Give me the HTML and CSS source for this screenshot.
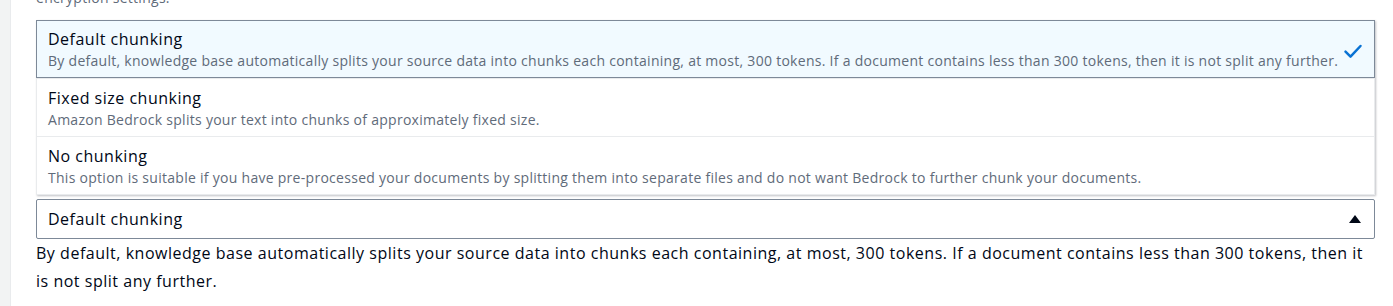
FILE: index.html
```html
<!DOCTYPE html>
<html lang="en">
<head>
  <meta charset="UTF-8">
  <title>Chunking strategy</title>
  <link rel="stylesheet" href="styles.css">
</head>
<body>
  <div class="rail"></div>

  <main class="panel">
    <p class="hint">encryption settings.</p>

    <!-- Opciones del desplegable -->
    <ul class="options">
      <li class="option selected">
        <div class="option-text">
          <span class="option-title">Default chunking</span>
          <span class="option-desc">By default, knowledge base automatically splits your source data into chunks each containing, at most, 300 tokens. If a document contains less than 300 tokens, then it is not split any further.</span>
        </div>
        <svg class="check" width="20" height="20" viewBox="0 0 16 16" aria-hidden="true">
          <polyline points="2,8.5 6,12.5 14,4" fill="none" stroke="#0972d3" stroke-width="2" stroke-linecap="round" stroke-linejoin="round"/>
        </svg>
      </li>
      <li class="option">
        <div class="option-text">
          <span class="option-title">Fixed size chunking</span>
          <span class="option-desc">Amazon Bedrock splits your text into chunks of approximately fixed size.</span>
        </div>
      </li>
      <li class="option">
        <div class="option-text">
          <span class="option-title">No chunking</span>
          <span class="option-desc">This option is suitable if you have pre-processed your documents by splitting them into separate files and do not want Bedrock to further chunk your documents.</span>
        </div>
      </li>
    </ul>

    <!-- Selector -->
    <button class="trigger" type="button">
      <span>Default chunking</span>
      <svg width="14" height="10" viewBox="0 0 14 10" aria-hidden="true">
        <polygon points="7,1 13,9 1,9" fill="#000716"/>
      </svg>
    </button>

    <p class="help">By default, knowledge base automatically splits your source data into chunks each containing, at most, 300 tokens. If a document contains less than 300 tokens, then it is not split any further.</p>
  </main>
</body>
</html>
```

FILE: styles.css
```css
body {
  font-family: "Open Sans", "Noto Sans", sans-serif;
  background-color: #fff;
  color: #000716;
  margin: 0;
  display: flex;
  height: 306px;
  overflow: hidden;
}

.rail {
  width: 10px;
  flex-shrink: 0;
  background-color: #f2f3f3;
  border-right: 1px solid #e9ebed;
}

.panel {
  flex: 1;
  padding: 0 18px 0 25px;
}

.hint {
  margin: -12px 0 0;
  font-size: 14px;
  line-height: 20px;
  letter-spacing: 0.28px;
  color: #5f6b7a;
}

.options {
  list-style: none;
  margin: 12px 0 0;
  padding: 0;
  border: 1px solid #e9ebed;
  border-top: none;
  box-shadow: 1px 1px 2px rgba(0, 7, 22, 0.25);
}

.option {
  display: flex;
  align-items: center;
  height: 58px;
  padding: 0 11px;
  box-sizing: border-box;
  border-top: 1px solid #e9ebed;
}

.option.selected {
  background-color: #f1faff;
  border: 1px solid #7d8998;
  margin: 0 -1px;
  padding: 0 11px 0 11px;
}

.option-text {
  flex: 1;
  min-width: 0;
  display: flex;
  flex-direction: column;
}

.option-title {
  font-size: 16px;
  line-height: 24px;
  letter-spacing: 0.5px;
}

.option-desc {
  font-size: 14px;
  line-height: 20px;
  letter-spacing: 0.28px;
  white-space: nowrap;
  color: #5f6b7a;
}

.check {
  flex-shrink: 0;
  margin-top: 4px;
}

.trigger {
  display: flex;
  align-items: center;
  justify-content: space-between;
  width: 100%;
  height: 40px;
  margin-top: 4px;
  padding: 0 12px 0 11px;
  background-color: #fff;
  border: 1px solid #7d8998;
  border-radius: 2px;
  font-family: inherit;
  font-size: 16px;
  letter-spacing: 0.5px;
  color: #000716;
}

.help {
  margin: 0;
  font-size: 16px;
  line-height: 28px;
  letter-spacing: 0.52px;
  color: #000716;
}
```
